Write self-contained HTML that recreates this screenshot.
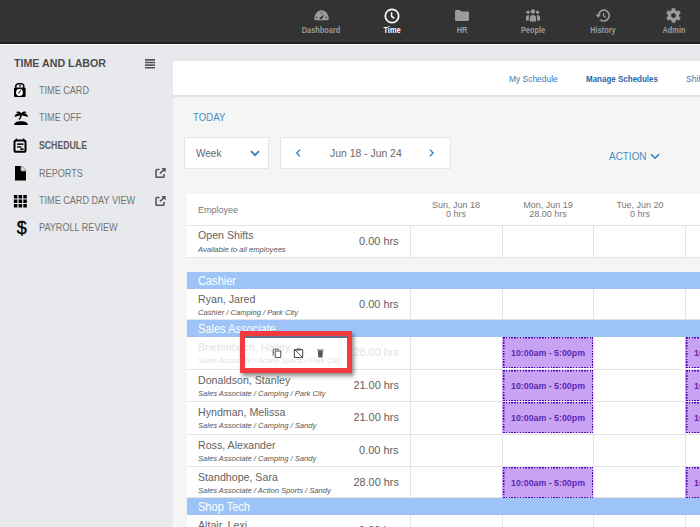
<!DOCTYPE html>
<html><head><meta charset="utf-8">
<style>
*{margin:0;padding:0;box-sizing:border-box}
html,body{width:700px;height:527px;overflow:hidden;background:#f5f5f5;font-family:"Liberation Sans",sans-serif}
.a{position:absolute;white-space:nowrap;line-height:1}
.sx{transform-origin:0 0}
#hdr{left:0;top:0;width:700px;height:42px;background:#333333}
.lbl{position:absolute;top:25.9px;font-size:8.8px;font-weight:bold;color:#9b9b9b;line-height:1;white-space:nowrap;text-align:center;width:70px;transform:scaleX(0.84)}
.ico{position:absolute}
#side{left:0;top:43px;width:173px;height:484px;background:#e8e9ec}
.mi{position:absolute;left:39px;font-size:10.4px;color:#737373;white-space:nowrap;line-height:1;transform-origin:0 0;transform:translateY(0.9px) scaleX(0.875)}
.mi.b{font-weight:bold;color:#5a5a5a;transform:translateY(0.7px) scaleX(0.84)}
#tabs{left:173px;top:61px;width:527px;height:36px;background:#fff;border-bottom:2px solid #e2e2e2}
.tab{position:absolute;top:73.5px;font-size:9.8px;color:#3b7ab3;white-space:nowrap;line-height:1;transform-origin:0 0}
.tab.b{font-weight:bold;color:#2d66a3}
.box{position:absolute;background:#fff;border:1px solid #e5e5e5}
.blue{color:#4b8dc0}
.row{position:absolute;left:187px;width:513px;background:#fff;border-bottom:1px solid #e4e4e4}
.grp{position:absolute;left:187px;width:513px;background:#9dc3f7;color:#fff;font-size:12px;line-height:1}
.grp span{position:absolute;left:11px;top:2.6px;transform-origin:0 0;transform:scaleX(0.92)}
.name{position:absolute;left:11px;top:5.4px;font-size:11.5px;color:#636363;white-space:nowrap;line-height:1;transform-origin:0 0;transform:scaleX(0.925)}
.sub{position:absolute;left:11px;top:19.6px;font-size:7.6px;font-style:italic;color:#555;white-space:nowrap;line-height:1}
.hrs{position:absolute;right:301px;top:10px;font-size:11.5px;color:#606060;white-space:nowrap;line-height:1;transform-origin:100% 0;transform:scaleX(0.95)}
.fade{color:#e3e3e3!important}
.vl{position:absolute;top:0;width:1px;background:#e4e4e4}
.shift{position:absolute;border:none;background:repeating-linear-gradient(90deg,#4a0cbc 0 1.5px,transparent 1.5px 2.8px) 0.5px 0.4px/100% 1.5px no-repeat,repeating-linear-gradient(90deg,#4a0cbc 0 1.5px,transparent 1.5px 2.8px) 0.5px 100%/100% 1.5px no-repeat,repeating-linear-gradient(180deg,#4a0cbc 0 1.5px,transparent 1.5px 2.7px) 0.5px 0/1.5px 100% no-repeat,repeating-linear-gradient(180deg,#4a0cbc 0 1.5px,transparent 1.5px 2.7px) 100% 0/1.5px 100% no-repeat,#c9a3f3;color:#5d26b5;font-size:9.7px;font-weight:bold;line-height:1;white-space:nowrap;overflow:hidden}
.shift span{position:absolute;left:9px;top:11.4px;transform-origin:0 0;transform:scaleX(0.91)}
.dh{position:absolute;top:201px;width:92px;text-align:center;font-size:9px;color:#777;line-height:8.6px}
</style></head>
<body>
<div id="hdr" class="a"></div>

<!-- nav icons -->
<svg class="ico" style="left:314px;top:10px" width="15" height="11" viewBox="0 0 15 11"><path d="M0.3 9.2C0.3 4.2 3.5 0.3 7.5 0.3S14.7 4.2 14.7 9.2C14.7 9.8 14.4 10.2 13.8 10.2H1.2C.6 10.2 .3 9.8 .3 9.2z" fill="#9b9b9b"/><circle cx="7.4" cy="2.9" r="0.75" fill="#333"/><circle cx="2.4" cy="7.6" r="0.75" fill="#333"/><circle cx="12.4" cy="7.6" r="0.75" fill="#333"/><path d="M6 7.4L10.6 4.3 7.8 8.9z" fill="#333"/><circle cx="6.9" cy="8.1" r="1.2" fill="#333"/></svg>
<div class="lbl" style="left:286px">Dashboard</div>
<svg class="ico" style="left:384px;top:7.5px" width="16" height="16" viewBox="0 0 16 16"><circle cx="8" cy="8" r="6.7" fill="none" stroke="#fff" stroke-width="1.7"/><path d="M7.6 4.2v4.2l2.7 2" fill="none" stroke="#fff" stroke-width="1.5"/></svg>
<div class="lbl" style="left:357px;color:#fff">Time</div>
<svg class="ico" style="left:455.4px;top:10px" width="14" height="11" viewBox="0 0 14 11"><path d="M0 1.2C0 .5.5 0 1.2 0h3.6l1.5 1.6h6.5c.7 0 1.2.5 1.2 1.2v7c0 .7-.5 1.2-1.2 1.2H1.2C.5 11 0 10.5 0 9.8z" fill="#9b9b9b"/></svg>
<div class="lbl" style="left:427px">HR</div>
<svg class="ico" style="left:526px;top:8px" width="14" height="14" viewBox="0 0 14 14"><g fill="#9b9b9b"><circle cx="6.9" cy="3.4" r="2.2"/><circle cx="2" cy="4.2" r="1.6"/><circle cx="11.6" cy="4.2" r="1.6"/><path d="M3.8 13.6V10C3.8 8.2 5.2 7 6.9 7S10 8.2 10 10v3.6z"/><path d="M0 12.6V9.2C0 8 .8 7.2 2 7.2h1.2C2.8 7.8 2.9 8.6 2.9 9.4v3.2zM14 12.6V9.2C14 8 13.2 7.2 12 7.2h-1.2c.4.6.3 1.4.3 2.2v3.2z"/></g></svg>
<div class="lbl" style="left:498px">People</div>
<svg class="ico" style="left:595.2px;top:9px" width="15" height="13" viewBox="0 0 15 13"><path d="M3.4 6.5A5.4 5.4 0 1 1 5.2 10.6" fill="none" stroke="#9b9b9b" stroke-width="1.6"/><path d="M0.6 5.6h5.4L3.3 8.7z" fill="#9b9b9b"/><path d="M8.6 4v2.9l2.2 1.5" fill="none" stroke="#9b9b9b" stroke-width="1.2"/></svg>
<div class="lbl" style="left:568px">History</div>
<svg class="ico" style="left:666.4px;top:8px" width="15" height="15" viewBox="2.2 2.2 19.6 19.6"><path fill="#9b9b9b" d="M19.14 12.94c.04-.3.06-.61.06-.94 0-.32-.02-.64-.07-.94l2.03-1.58a.49.49 0 0 0 .12-.61l-1.92-3.32a.488.488 0 0 0-.59-.22l-2.39.96c-.5-.38-1.030-.7-1.62-.94l-.36-2.54a.484.484 0 0 0-.48-.41h-3.84c-.24 0-.43.17-.47.41l-.36 2.54c-.59.24-1.130.57-1.62.94l-2.39-.96c-.22-.08-.47 0-.59.22L2.74 8.87c-.12.21-.08.47.12.61l2.03 1.58c-.5.3-.09.63-.09.94s.02.64.07.94l-2.03 1.58a.49.49 0 0 0-.12.61l1.92 3.32c.12.22.37.29.59.22l2.39-.96c.5.38 1.03.7 1.62.94l.36 2.54c.05.24.24.41.48.41h3.84c.24 0 .44-.17.47-.41l.36-2.54c.59-.24 1.13-.56 1.62-.94l2.39.96c.22.08.47 0 .59-.22l1.92-3.32c.12-.22.07-.47-.12-.61l-2.01-1.58zM12 15.2c-1.77 0-3.2-1.43-3.2-3.2s1.43-3.2 3.2-3.2 3.2 1.43 3.2 3.2-1.43 3.2-3.2 3.2z"/></svg>
<div class="lbl" style="left:639px">Admin</div>

<!-- sidebar -->
<div id="side" class="a"></div>
<div class="a" style="left:0;top:42px;width:700px;height:2px;background:#222"></div>
<div class="a" style="left:0;top:44px;width:700px;height:1px;background:#f7f7f9"></div>
<div class="a sx" style="left:14px;top:56.5px;font-size:11.6px;font-weight:bold;color:#4d4d4d;transform:scaleX(0.92)">TIME AND LABOR</div>
<svg class="ico" style="left:145px;top:59px" width="10" height="10" viewBox="0 0 10 10"><rect y="0" width="10" height="1.7" fill="#555"/><rect y="2.7" width="10" height="1.6" fill="#555"/><rect y="5.3" width="10" height="1.7" fill="#555"/><rect y="8" width="10" height="1.5" fill="#555"/></svg>

<svg class="ico" style="left:13px;top:83px" width="14" height="15" viewBox="0 0 14 15"><path d="M3.4 4.6C2.6 4 2.5 3.2 2.9 2.3 3.4 1.2 4.2.8 5.4.8h2.8c1.2 0 2 .4 2.5 1.5.4.9.3 1.7-.5 2.3" fill="none" stroke="#000" stroke-width="1.5"/><rect x="6" y="1.9" width="1.8" height="1.8" fill="#000" opacity="0.75"/><rect x="1" y="4.6" width="11.6" height="9.4" rx="1.1" fill="#000"/><circle cx="6.5" cy="9.5" r="3.4" fill="#fff"/><path d="M7.4 7.4L6.6 9.7 5.1 9.8" fill="none" stroke="#000" stroke-width="0.95"/></svg>
<div class="mi" style="top:85px">TIME CARD</div>

<svg class="ico" style="left:14px;top:111px" width="15" height="15" viewBox="0 0 15 15"><g fill="#000"><path d="M0 14.1C0.3 11.8 2.5 10.3 7 10.3S13.7 11.8 14 14.1z"/><path d="M7.4 2.4C6 .3 3.4 0 1.8 1.2 3 1.5 3.8 1.9 4.1 2.4 2.2 2.6.6 3.9.5 5.9 2.6 5.2 5.2 4.6 7.4 4.2z"/><path d="M7.2 2.4C8.6.3 11.2 0 12.8 1.2 11.6 1.5 10.8 1.9 10.5 2.4 12.4 2.6 14 3.9 14.1 5.9 12 5.2 9.4 4.6 7.2 4.2z"/><path d="M6.6 3.4L8.1 3.6C7.8 5.6 7.1 7.2 5.9 8.7L4.4 8.2C5.6 6.8 6.3 5.3 6.6 3.4z"/></g></svg>
<div class="mi" style="top:112px">TIME OFF</div>

<svg class="ico" style="left:13px;top:138px" width="14" height="15" viewBox="0 0 14 15"><rect x="1.5" y="2.5" width="11" height="11.3" rx="1.6" fill="none" stroke="#000" stroke-width="2"/><rect x="2.6" y="0.6" width="1.6" height="2.4" fill="#000"/><rect x="9.8" y="0.6" width="1.6" height="2.4" fill="#000"/><rect x="4" y="5.4" width="6.5" height="1.5" fill="#000"/><rect x="4" y="8.2" width="4.4" height="1.4" fill="#000"/><rect x="7.2" y="10.3" width="3.4" height="1.6" fill="#000"/></svg>
<div class="mi b" style="top:140px">SCHEDULE</div>

<svg class="ico" style="left:14px;top:166px" width="13" height="15" viewBox="0 0 13 15"><path d="M1 0h6.8L12 4.3V14.4H1z" fill="#000"/><path d="M7.4 0v4.6H12" fill="#fff" opacity="0.9"/><path d="M7.2 0.2V4.8H11.8" fill="none" stroke="#e8e9ec" stroke-width="0.8"/></svg>
<div class="mi" style="top:168px">REPORTS</div>
<svg class="ico" style="left:155px;top:168px" width="11" height="10" viewBox="0 0 11 10"><path d="M4.5 1.5H2.3C1.5 1.5 1 2 1 2.8v5.4C1 9 1.5 9.4 2.3 9.4h5.4c.8 0 1.3-.5 1.3-1.3V6" fill="none" stroke="#555" stroke-width="1.6"/><path d="M5 5.5L9.4 1.1" stroke="#555" stroke-width="1.7"/><path d="M6.3 0h4.4v4.4z" fill="#555"/></svg>

<svg class="ico" style="left:13px;top:194px" width="15" height="14" viewBox="0 0 15 14"><g fill="#000"><rect x="0.9" y="1.0" width="3.5" height="3.5"/><rect x="5.6" y="1.0" width="3.5" height="3.5"/><rect x="10.3" y="1.0" width="3.5" height="3.5"/><rect x="0.9" y="5.5" width="3.5" height="3.5"/><rect x="5.6" y="5.5" width="3.5" height="3.5"/><rect x="10.3" y="5.5" width="3.5" height="3.5"/><rect x="0.9" y="10.0" width="3.5" height="3.5"/><rect x="5.6" y="10.0" width="3.5" height="3.5"/><rect x="10.3" y="10.0" width="3.5" height="3.5"/></g></svg>
<div class="mi" style="top:195px">TIME CARD DAY VIEW</div>
<svg class="ico" style="left:155px;top:196px" width="11" height="10" viewBox="0 0 11 10"><path d="M4.5 1.5H2.3C1.5 1.5 1 2 1 2.8v5.4C1 9 1.5 9.4 2.3 9.4h5.4c.8 0 1.3-.5 1.3-1.3V6" fill="none" stroke="#555" stroke-width="1.6"/><path d="M5 5.5L9.4 1.1" stroke="#555" stroke-width="1.7"/><path d="M6.3 0h4.4v4.4z" fill="#555"/></svg>

<div class="a" style="left:16.8px;top:218.8px;font-size:18px;color:#000;-webkit-text-stroke:0.35px #000">$</div>
<div class="mi" style="top:222px">PAYROLL REVIEW</div>

<!-- tabs -->
<div class="a" style="left:173px;top:45px;width:527px;height:16px;background:#e8e9ec"></div>
<div id="tabs" class="a"></div>
<div class="tab" style="left:509px;transform:scaleX(0.86)">My Schedule</div>
<div class="tab b" style="left:586px;transform:scaleX(0.816)">Manage Schedules</div>
<div class="tab" style="left:686px;transform:scaleX(0.88)">Shifts</div>

<div class="a blue sx" style="left:193px;top:113px;font-size:10px;transform:scaleX(0.97)">TODAY</div>
<div class="box" style="left:184px;top:137px;width:85px;height:32px"></div>
<div class="a sx" style="left:196px;top:147.8px;font-size:11px;color:#666;transform:scaleX(0.91)">Week</div>
<svg class="ico" style="left:250px;top:150px" width="10" height="7" viewBox="0 0 10 7"><path d="M1 1.2l4 4 4-4" fill="none" stroke="#2f7fbf" stroke-width="1.7"/></svg>
<div class="box" style="left:280px;top:137px;width:171px;height:32px"></div>
<svg class="ico" style="left:295px;top:148px" width="7" height="10" viewBox="0 0 7 10"><path d="M5 1.6L1.7 5 5 8.4" fill="none" stroke="#2f7fbf" stroke-width="1.35"/></svg>
<div class="a sx" style="left:329.5px;top:148px;font-size:11px;color:#6a6a6a;transform:scaleX(0.945)">Jun 18 - Jun 24</div>
<svg class="ico" style="left:428px;top:148px" width="7" height="10" viewBox="0 0 7 10"><path d="M1.8 1.6L5.1 5 1.8 8.4" fill="none" stroke="#2f7fbf" stroke-width="1.35"/></svg>
<div class="a blue sx" style="left:608.5px;top:151.6px;font-size:10.3px;transform:scaleX(0.965)">ACTION</div>
<svg class="ico" style="left:650px;top:152.5px" width="10" height="7" viewBox="0 0 10 7"><path d="M1 1.2l4 4 4-4" fill="none" stroke="#2f7fbf" stroke-width="1.6"/></svg>

<!-- table header -->
<div class="row" style="top:194px;height:32px"></div>
<div class="a" style="left:198px;top:206px;font-size:9px;color:#777">Employee</div>
<div class="dh" style="left:410px">Sun, Jun 18<br>0 hrs</div>
<div class="dh" style="left:502px">Mon, Jun 19<br>28.00 hrs</div>
<div class="dh" style="left:594px">Tue, Jun 20<br>0 hrs</div>

<!-- open shifts -->
<div class="row" style="top:226px;height:32px">
<div class="name" style="top:4.4px">Open Shifts</div>
<div class="sub">Available to all employees</div>
<div class="hrs">0.00 hrs</div>
<div class="vl" style="left:223px;bottom:0"></div><div class="vl" style="left:315px;bottom:0"></div><div class="vl" style="left:406px;bottom:0"></div><div class="vl" style="left:498px;bottom:0"></div>
</div>

<div class="grp" style="top:272px;height:17px"><span>Cashier</span></div>
<div class="row" style="top:289px;height:31px">
<div class="name">Ryan, Jared</div>
<div class="sub">Cashier / Camping / Park City</div>
<div class="hrs">0.00 hrs</div>
<div class="vl" style="left:223px;bottom:0"></div><div class="vl" style="left:315px;bottom:0"></div><div class="vl" style="left:406px;bottom:0"></div><div class="vl" style="left:498px;bottom:0"></div>
</div>
<div class="grp" style="top:320px;height:17px"><span>Sales Associate</span></div>
<div class="row" style="top:337px;height:33px">
<div class="name fade">Brietenbach, Hailey</div>
<div class="sub fade">Sales Associate / Action Sports / Park City</div>
<div class="hrs fade">28.00 hrs</div>
<div class="vl" style="left:223px;bottom:0"></div><div class="vl" style="left:315px;bottom:0"></div><div class="vl" style="left:406px;bottom:0"></div><div class="vl" style="left:498px;bottom:0"></div>
</div>
<div class="row" style="top:370px;height:32px">
<div class="name">Donaldson, Stanley</div>
<div class="sub">Sales Associate / Camping / Park City</div>
<div class="hrs">21.00 hrs</div>
<div class="vl" style="left:223px;bottom:0"></div><div class="vl" style="left:315px;bottom:0"></div><div class="vl" style="left:406px;bottom:0"></div><div class="vl" style="left:498px;bottom:0"></div>
</div>
<div class="row" style="top:402px;height:33px">
<div class="name">Hyndman, Melissa</div>
<div class="sub">Sales Associate / Camping / Sandy</div>
<div class="hrs">21.00 hrs</div>
<div class="vl" style="left:223px;bottom:0"></div><div class="vl" style="left:315px;bottom:0"></div><div class="vl" style="left:406px;bottom:0"></div><div class="vl" style="left:498px;bottom:0"></div>
</div>
<div class="row" style="top:435px;height:32px">
<div class="name">Ross, Alexander</div>
<div class="sub">Sales Associate / Camping / Sandy</div>
<div class="hrs">0.00 hrs</div>
<div class="vl" style="left:223px;bottom:0"></div><div class="vl" style="left:315px;bottom:0"></div><div class="vl" style="left:406px;bottom:0"></div><div class="vl" style="left:498px;bottom:0"></div>
</div>
<div class="row" style="top:467px;height:31px">
<div class="name">Standhope, Sara</div>
<div class="sub">Sales Associate / Action Sports / Sandy</div>
<div class="hrs">28.00 hrs</div>
<div class="vl" style="left:223px;bottom:0"></div><div class="vl" style="left:315px;bottom:0"></div><div class="vl" style="left:406px;bottom:0"></div><div class="vl" style="left:498px;bottom:0"></div>
</div>
<div class="grp" style="top:498px;height:17px"><span>Shop Tech</span></div>
<div class="row" style="top:515px;height:32px">
<div class="name">Altair, Lexi</div>
<div class="hrs">0.00 hrs</div>
<div class="vl" style="left:223px;bottom:0"></div><div class="vl" style="left:315px;bottom:0"></div><div class="vl" style="left:406px;bottom:0"></div><div class="vl" style="left:498px;bottom:0"></div>
</div>

<!-- shifts -->
<div class="shift" style="left:502px;top:337px;width:91px;height:31px"><span>10:00am - 5:00pm</span></div>
<div class="shift" style="left:502px;top:370px;width:91px;height:31px"><span>10:00am - 5:00pm</span></div>
<div class="shift" style="left:502px;top:402px;width:91px;height:31px"><span>10:00am - 5:00pm</span></div>
<div class="shift" style="left:502px;top:467px;width:91px;height:31px"><span>10:00am - 5:00pm</span></div>
<div class="shift" style="left:685px;top:337px;width:91px;height:31px"><span>10:00am - 5:00pm</span></div>
<div class="shift" style="left:685px;top:370px;width:91px;height:31px"><span>10:00am - 5:00pm</span></div>
<div class="shift" style="left:685px;top:402px;width:91px;height:31px"><span>10:00am - 5:00pm</span></div>
<div class="shift" style="left:685px;top:467px;width:91px;height:31px"><span>10:00am - 5:00pm</span></div>

<!-- overlay red box -->
<div class="a" style="left:240px;top:330.5px;width:112px;height:42px;border:5px solid #f23b3f;box-shadow:2px 3px 4px rgba(0,0,0,0.45)"></div>
<div class="a" style="left:245px;top:335.5px;width:102px;height:2px;background:#5d708c"></div>
<svg class="ico" style="left:272px;top:348px" width="11" height="10" viewBox="0 0 11 10"><path d="M1.2 7.6V2.2c0-.6.4-1 1-1h4.6" fill="none" stroke="#555" stroke-width="1"/><rect x="3.2" y="3" width="5.6" height="6.5" rx="0.8" fill="none" stroke="#555" stroke-width="1.1"/></svg>
<svg class="ico" style="left:293px;top:348px" width="11" height="10" viewBox="0 0 11 10"><rect x="1.3" y="1.6" width="8.4" height="7.9" rx="0.9" fill="none" stroke="#555" stroke-width="1.1"/><rect x="3.6" y="0.5" width="3.8" height="1.9" fill="#555"/><path d="M0.8 0.8L10 9.8" stroke="#555" stroke-width="1"/></svg>
<svg class="ico" style="left:317px;top:349px" width="7" height="9" viewBox="0 0 7 9"><rect x="0.3" y="0.5" width="6.2" height="1.1" fill="#555"/><path d="M0.9 2h5l-.4 6.6H1.3z" fill="#555"/></svg>

</body></html>
